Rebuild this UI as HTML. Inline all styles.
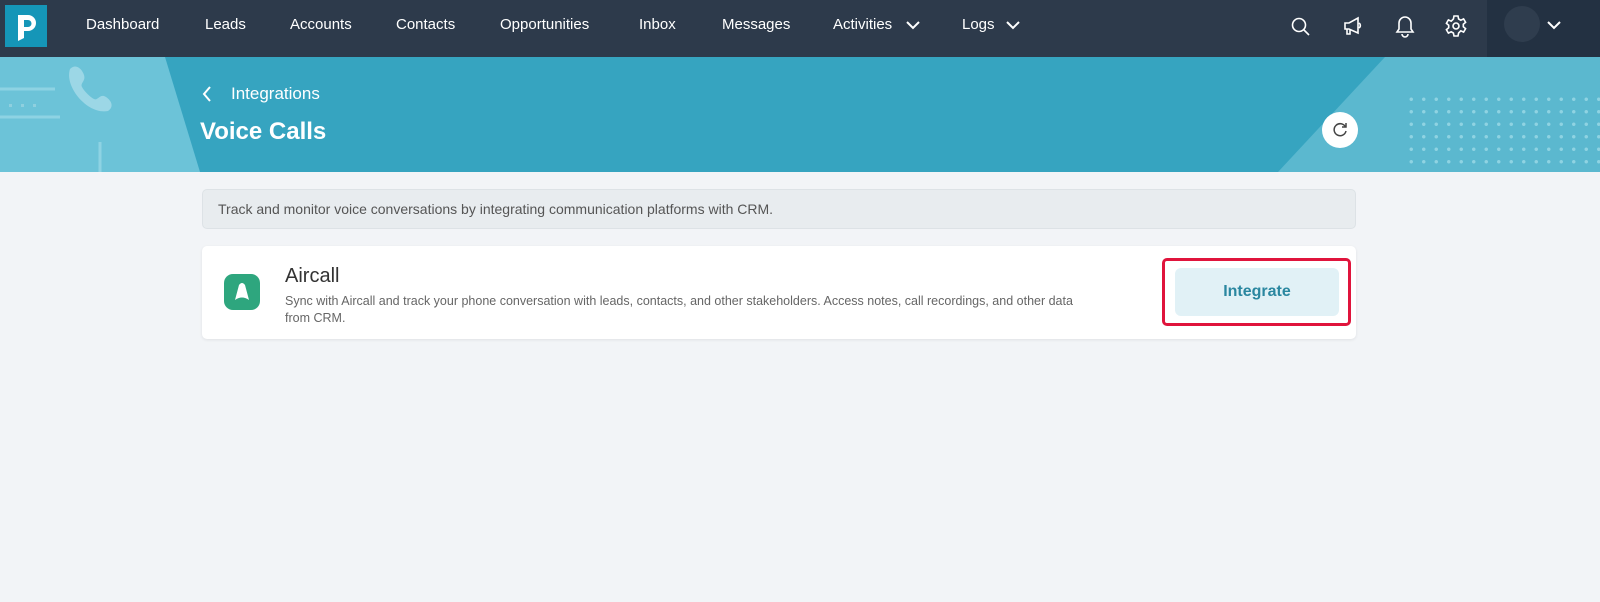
<!DOCTYPE html>
<html><head><meta charset="utf-8"><style>
*{margin:0;padding:0;box-sizing:border-box}
body{width:1600px;height:602px;background:#f2f4f7;font-family:"Liberation Sans",sans-serif;position:relative;overflow:hidden}
.nav{position:absolute;left:0;top:0;width:1600px;height:57px;background:#2d3a4b}
.nav span{position:absolute;top:16px;color:#fff;font-size:15px}
.logo{position:absolute;left:5px;top:5px;width:42px;height:42px;background:#1596b8}
.banner{position:absolute;left:0;top:57px;width:1600px;height:115px;background:#36a4c0;overflow:hidden}
.abs{position:absolute}
</style></head><body>
<div class="nav">
<div class="logo"><svg width="42" height="42"><path d="M13 10h10a8 8 0 0 1 0 16h-4v7l-6 3z" fill="#fff"/><path d="M19 15h4a3.5 3.5 0 0 1 0 7h-4z" fill="#1596b8"/></svg></div>
<span style="left:86px">Dashboard</span><span style="left:205px">Leads</span><span style="left:290px">Accounts</span><span style="left:396px">Contacts</span><span style="left:500px">Opportunities</span><span style="left:639px">Inbox</span><span style="left:722px">Messages</span><span style="left:833px">Activities</span><span style="left:962px">Logs</span>
<svg class="abs" style="left:905px;top:19px" width="16" height="12"><path d="M2 3l6 6 6-6" stroke="#fff" stroke-width="2" fill="none"/></svg>
<svg class="abs" style="left:1005px;top:19px" width="16" height="12"><path d="M2 3l6 6 6-6" stroke="#fff" stroke-width="2" fill="none"/></svg>
<svg class="abs" style="left:1290px;top:16px" width="22" height="22" fill="none" stroke="#fff" stroke-width="1.6"><circle cx="9" cy="9" r="6.5"/><path d="M14 14l5 5"/></svg>
<svg class="abs" style="left:1342px;top:15px" width="22" height="22" fill="none" stroke="#fff" stroke-width="1.6"><path d="M3 8h4l9-5v15l-9-4H3z M5 14v5h3v-5 M17 8a3 3 0 0 1 0 5"/></svg>
<svg class="abs" style="left:1394px;top:14px" width="22" height="24" fill="none" stroke="#fff" stroke-width="1.6"><path d="M11 3a6 6 0 0 1 6 6v6l2 3H3l2-3V9a6 6 0 0 1 6-6z M8 20a3 3 0 0 0 6 0"/></svg>
<svg class="abs" style="left:1444px;top:14px" width="24" height="24" fill="none" stroke="#fff" stroke-width="1.6"><circle cx="12" cy="12" r="3"/><path d="M10 2h4l.6 3 2.2 1.2 2.8-1.3 2 3.4-2.3 2v2.4l2.3 2-2 3.4-2.8-1.3L14.6 19 14 22h-4l-.6-3-2.2-1.2-2.8 1.3-2-3.4 2.3-2v-2.4l-2.3-2 2-3.4 2.8 1.3L9.4 5z"/></svg>
<div class="abs" style="left:1487px;top:0;width:113px;height:57px;background:#233142"></div>
<div class="abs" style="left:1504px;top:6px;width:36px;height:36px;border-radius:50%;background:#2f3d4e"></div>
<svg class="abs" style="left:1546px;top:19px" width="16" height="12"><path d="M2 3l6 6 6-6" stroke="#fff" stroke-width="2" fill="none"/></svg>
</div>
<div class="banner">
<svg class="abs" style="left:0;top:0" width="1600" height="115">
<polygon points="0,0 165,0 200,115 0,115" fill="#6cc3d8"/>
<polygon points="1385,0 1600,0 1600,115 1278,115" fill="#5bb8cf"/>
<path d="M0 32h55 M0 60h60 M100 85v30" stroke="#8ed3e3" stroke-width="3" fill="none"/>
<path d="M70 12c6-6 12 0 14 6s-4 8-2 12 8 10 12 12 6-6 12-2 8 10 2 14c-20 4-44-24-38-42z" fill="#9cd7e6"/>
<g fill="#8fd0df">
<rect x="9" y="47" width="3" height="3"/><rect x="21" y="47" width="3" height="3"/><rect x="33" y="47" width="3" height="3"/>
</g>
</svg>
<div class="abs" style="left:1405px;top:36px;width:195px;height:76px;background-image:radial-gradient(circle,#8fd3e2 1.5px,transparent 2px);background-size:12.5px 12.5px"></div>
<svg class="abs" style="left:200px;top:27px" width="14" height="20"><path d="M10 3L4 10l6 7" stroke="#fff" stroke-width="2" fill="none"/></svg>
<div class="abs" style="left:231px;top:27px;color:#fff;font-size:17px">Integrations</div>
<div class="abs" style="left:200px;top:61px;color:#fff;font-size:24px;font-weight:bold">Voice Calls</div>
<div class="abs" style="left:1322px;top:55px;width:36px;height:36px;border-radius:50%;background:#fff"></div>
<svg class="abs" style="left:1330px;top:63px" width="20" height="20" fill="none" stroke="#444" stroke-width="1.5"><path d="M15.5 7A6 6 0 1 0 16 11"/><path d="M16 3v4h-4"/></svg>
</div>
<div class="abs" style="left:202px;top:189px;width:1154px;height:40px;background:#e8ecef;border:1px solid #dde2e6;border-radius:5px;font-size:14px;color:#555;padding:11px 15px">Track and monitor voice conversations by integrating communication platforms with CRM.</div>
<div class="abs" style="left:202px;top:246px;width:1154px;height:93px;background:#fff;border-radius:5px;box-shadow:0 1px 3px rgba(0,0,0,.08)"></div>
<div class="abs" style="left:224px;top:274px;width:36px;height:36px;background:#2ea67e;border-radius:9px"></div>
<svg class="abs" style="left:224px;top:274px" width="36" height="36"><path d="M11 26 L15 11 Q18 7 21 11 L25 26 Q18 21 11 26z" fill="#fff"/></svg>
<div class="abs" style="left:285px;top:265px;font-size:20px;color:#333">Aircall</div>
<div class="abs" style="left:285px;top:293px;font-size:12.5px;color:#666;line-height:17px;width:795px">Sync with Aircall and track your phone conversation with leads, contacts, and other stakeholders. Access notes, call recordings, and other data from CRM.</div>
<div class="abs" style="left:1162px;top:258px;width:189px;height:68px;border:3px solid #e0143c;border-radius:5px"></div>
<div class="abs" style="left:1175px;top:268px;width:164px;height:48px;background:#e1f1f6;border-radius:6px;color:#2a87a0;font-size:16px;font-weight:bold;text-align:center;line-height:48px">Integrate</div>
</body></html>
